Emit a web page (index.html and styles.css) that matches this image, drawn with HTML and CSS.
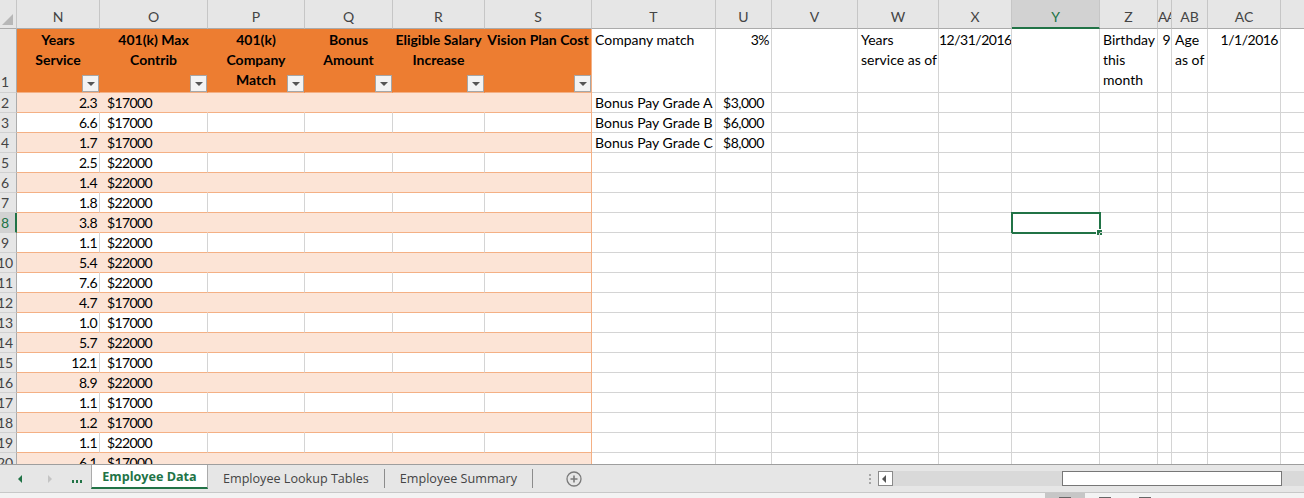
FILE: index.html
```html
<!DOCTYPE html>
<html lang="en-US">
  <head>
    <meta charset="utf-8">
    <title>Employee Data</title>
    <link rel="stylesheet" href="styles.css">
  </head>
<body>
  <div class="app">
    <div class="sheet">
      <table class="grid">
        <colgroup>
          <col class="c-rh"><col class="c-n"><col class="c-o"><col class="c-p"><col class="c-q"><col class="c-r"><col class="c-s">
          <col class="c-t"><col class="c-u"><col class="c-v"><col class="c-w"><col class="c-x"><col class="c-y"><col class="c-z">
          <col class="c-aa"><col class="c-ab"><col class="c-ac"><col class="c-ad">
        </colgroup>
        <tr class="colhead">
          <th class="corner"><span class="tri"></span></th>
          <th>N</th><th>O</th><th>P</th><th>Q</th><th>R</th><th>S</th><th>T</th><th>U</th><th>V</th><th>W</th><th>X</th>
          <th class="sel">Y</th><th>Z</th><th class="tight">AA</th><th>AB</th><th>AC</th><th></th>
        </tr>
        <tr class="r1">
          <th><span>1</span></th>
          <td class="hd">Years<br>Service<span class="filter"></span></td>
          <td class="hd">401(k) Max<br>Contrib<span class="filter"></span></td>
          <td class="hd">401(k)<br>Company<br>Match<span class="filter"></span></td>
          <td class="hd">Bonus<br>Amount<span class="filter"></span></td>
          <td class="hd">Eligible Salary<br>Increase<span class="filter"></span></td>
          <td class="hd">Vision Plan Cost<span class="filter"></span></td>
          <td>Company match</td>
          <td class="num">3%</td>
          <td></td>
          <td>Years<br>service as of</td>
          <td class="num">12/31/2016</td>
          <td></td>
          <td>Birthday<br>this<br>month</td>
          <td class="num tight">9</td>
          <td>Age<br>as of</td>
          <td class="num">1/1/2016</td>
          <td></td>
        </tr>
        <tr class="data band"><th><span>2</span></th><td class="num">2.3</td><td class="cash">$17000</td><td></td><td></td><td></td><td></td><td>Bonus Pay Grade A</td><td class="acct"><span class="cur">$</span>3,000</td><td></td><td></td><td></td><td></td><td></td><td></td><td></td><td></td><td></td></tr>
        <tr class="data"><th><span>3</span></th><td class="num">6.6</td><td class="cash">$17000</td><td></td><td></td><td></td><td></td><td>Bonus Pay Grade B</td><td class="acct"><span class="cur">$</span>6,000</td><td></td><td></td><td></td><td></td><td></td><td></td><td></td><td></td><td></td></tr>
        <tr class="data band"><th><span>4</span></th><td class="num">1.7</td><td class="cash">$17000</td><td></td><td></td><td></td><td></td><td>Bonus Pay Grade C</td><td class="acct"><span class="cur">$</span>8,000</td><td></td><td></td><td></td><td></td><td></td><td></td><td></td><td></td><td></td></tr>
        <tr class="data"><th><span>5</span></th><td class="num">2.5</td><td class="cash">$22000</td><td></td><td></td><td></td><td></td><td></td><td></td><td></td><td></td><td></td><td></td><td></td><td></td><td></td><td></td><td></td></tr>
        <tr class="data band"><th><span>6</span></th><td class="num">1.4</td><td class="cash">$22000</td><td></td><td></td><td></td><td></td><td></td><td></td><td></td><td></td><td></td><td></td><td></td><td></td><td></td><td></td><td></td></tr>
        <tr class="data"><th><span>7</span></th><td class="num">1.8</td><td class="cash">$22000</td><td></td><td></td><td></td><td></td><td></td><td></td><td></td><td></td><td></td><td></td><td></td><td></td><td></td><td></td><td></td></tr>
        <tr class="data band"><th class="sel"><span>8</span></th><td class="num">3.8</td><td class="cash">$17000</td><td></td><td></td><td></td><td></td><td></td><td></td><td></td><td></td><td></td><td class="active"><span class="cursor"></span></td><td></td><td></td><td></td><td></td><td></td></tr>
        <tr class="data"><th><span>9</span></th><td class="num">1.1</td><td class="cash">$22000</td><td></td><td></td><td></td><td></td><td></td><td></td><td></td><td></td><td></td><td></td><td></td><td></td><td></td><td></td><td></td></tr>
        <tr class="data band"><th><span>10</span></th><td class="num">5.4</td><td class="cash">$22000</td><td></td><td></td><td></td><td></td><td></td><td></td><td></td><td></td><td></td><td></td><td></td><td></td><td></td><td></td><td></td></tr>
        <tr class="data"><th><span>11</span></th><td class="num">7.6</td><td class="cash">$22000</td><td></td><td></td><td></td><td></td><td></td><td></td><td></td><td></td><td></td><td></td><td></td><td></td><td></td><td></td><td></td></tr>
        <tr class="data band"><th><span>12</span></th><td class="num">4.7</td><td class="cash">$17000</td><td></td><td></td><td></td><td></td><td></td><td></td><td></td><td></td><td></td><td></td><td></td><td></td><td></td><td></td><td></td></tr>
        <tr class="data"><th><span>13</span></th><td class="num">1.0</td><td class="cash">$17000</td><td></td><td></td><td></td><td></td><td></td><td></td><td></td><td></td><td></td><td></td><td></td><td></td><td></td><td></td><td></td></tr>
        <tr class="data band"><th><span>14</span></th><td class="num">5.7</td><td class="cash">$22000</td><td></td><td></td><td></td><td></td><td></td><td></td><td></td><td></td><td></td><td></td><td></td><td></td><td></td><td></td><td></td></tr>
        <tr class="data"><th><span>15</span></th><td class="num">12.1</td><td class="cash">$17000</td><td></td><td></td><td></td><td></td><td></td><td></td><td></td><td></td><td></td><td></td><td></td><td></td><td></td><td></td><td></td></tr>
        <tr class="data band"><th><span>16</span></th><td class="num">8.9</td><td class="cash">$22000</td><td></td><td></td><td></td><td></td><td></td><td></td><td></td><td></td><td></td><td></td><td></td><td></td><td></td><td></td><td></td></tr>
        <tr class="data"><th><span>17</span></th><td class="num">1.1</td><td class="cash">$17000</td><td></td><td></td><td></td><td></td><td></td><td></td><td></td><td></td><td></td><td></td><td></td><td></td><td></td><td></td><td></td></tr>
        <tr class="data band"><th><span>18</span></th><td class="num">1.2</td><td class="cash">$17000</td><td></td><td></td><td></td><td></td><td></td><td></td><td></td><td></td><td></td><td></td><td></td><td></td><td></td><td></td><td></td></tr>
        <tr class="data"><th><span>19</span></th><td class="num">1.1</td><td class="cash">$22000</td><td></td><td></td><td></td><td></td><td></td><td></td><td></td><td></td><td></td><td></td><td></td><td></td><td></td><td></td><td></td></tr>
        <tr class="data band"><th><span>20</span></th><td class="num">6.1</td><td class="cash">$17000</td><td></td><td></td><td></td><td></td><td></td><td></td><td></td><td></td><td></td><td></td><td></td><td></td><td></td><td></td><td></td></tr>
      </table>
    </div>

    <div class="tabbar">
      <div class="nav">
        <span class="arrow-left"></span>
        <span class="arrow-right"></span>
        <span class="more"><i></i><i></i><i></i></span>
      </div>
      <div class="tab active">Employee Data</div>
      <div class="tab">Employee Lookup Tables</div>
      <div class="tab">Employee Summary</div>
      <div class="add">
        <svg width="16" height="16" viewBox="0 0 16 16">
          <circle cx="8" cy="8" r="7" fill="none" stroke="#7a7a7a" stroke-width="1.3"/>
          <path d="M8 4.5v7M4.5 8h7" stroke="#7a7a7a" stroke-width="1.6"/>
        </svg>
      </div>
      <div class="spacer"></div>
      <div class="dots"><i></i><i></i><i></i></div>
      <div class="hscroll">
        <span class="scroll-btn"></span>
        <div class="track">
          <span class="thumb"></span>
        </div>
      </div>
    </div>

    <div class="status">
      <div class="views">
        <span class="view on"><i></i></span>
        <span class="view"><i></i></span>
        <span class="view"><i></i></span>
      </div>
    </div>
  </div>
</body>
</html>
```

FILE: styles.css
```css
body {
  margin: 0;
  background: #fff;
  font-family: "Lato", "Liberation Sans", sans-serif;
  overflow: hidden;
}

.app {
  width: 1304px;
  height: 498px;
  display: flex;
  flex-direction: column;
  overflow: hidden;
}

.sheet {
  height: 464px;
  overflow: hidden;
  flex: none;
}

.grid {
  border-collapse: separate;
  border-spacing: 0;
  table-layout: fixed;
  width: 1350px;
  font-size: 14px;
  color: #000;
}

.c-rh { width: 17px; }
.c-n { width: 83px; }
.c-o { width: 108px; }
.c-p { width: 97px; }
.c-q { width: 88px; }
.c-r { width: 92px; }
.c-s { width: 107px; }
.c-t { width: 124px; }
.c-u { width: 56px; }
.c-v { width: 86px; }
.c-w { width: 81px; }
.c-x { width: 73px; }
.c-y { width: 88px; }
.c-z { width: 58px; }
.c-aa { width: 14px; }
.c-ab { width: 36px; }
.c-ac { width: 73px; }
.c-ad { width: 69px; }

.grid td {
  border-right: 1px solid #d4d4d4;
  border-bottom: 1px solid #d4d4d4;
  padding: 0 3px;
  white-space: nowrap;
  overflow: hidden;
  line-height: 19px;
  position: relative;
}

.grid th {
  background: #e6e6e6;
  color: #444;
  font-weight: normal;
  padding: 0;
  white-space: nowrap;
  overflow: hidden;
}

/* column letters */
.colhead {
  height: 28px;
}

.colhead th {
  border-right: 1px solid #c6c6c6;
  border-bottom: 1px solid #ababab;
  padding-top: 7px;
  line-height: 20px;
  vertical-align: top;
  text-align: center;
}

.colhead th.sel {
  background: #d2d2d2;
  color: #217346;
  border-bottom: 2px solid #217346;
}

.colhead th.tight {
  letter-spacing: -1px;
  text-align: left;
}

.corner {
  position: relative;
}

.corner .tri {
  position: absolute;
  right: 3px;
  bottom: 3px;
  width: 0;
  height: 0;
  border-left: 11px solid transparent;
  border-bottom: 11px solid #b7b7b7;
}

/* row numbers: the column is scrolled, only its right part shows */
.r1 th, .data th {
  border-right: 1px solid #ababab;
  border-bottom: 1px solid #d0d0d0;
  line-height: 19px;
}

.r1 th span, .data th span {
  display: block;
  width: 30px;
  margin-left: -10px;
  text-align: center;
}

.data th.sel {
  background: #d2d2d2;
  color: #217346;
  border-right: 2px solid #217346;
}

/* header row of the table */
.r1 {
  height: 64px;
}

.r1 th {
  vertical-align: bottom;
  line-height: 20px;
}

.r1 td {
  vertical-align: top;
  line-height: 20px;
  padding-top: 1px;
}

.r1 td.hd {
  background: #ed7d31;
  border-right-color: #ed7d31;
  border-bottom-color: #f4b084;
  text-align: center;
  font-weight: bold;
  padding: 1px 0 0;
}

.r1 td.hd:nth-child(7) {
  border-right-color: #f4b084;
}

.filter {
  position: absolute;
  right: 0;
  bottom: 0;
  width: 17px;
  height: 17px;
  box-sizing: border-box;
  border: 1px solid #a6a6a6;
  background: #f3f3f3;
}

.filter::after {
  content: "";
  position: absolute;
  left: 4px;
  top: 6px;
  border-left: 4px solid transparent;
  border-right: 4px solid transparent;
  border-top: 4px solid #555;
}

/* data rows */
.data {
  height: 20px;
}

.data td:nth-child(-n+7) {
  border-bottom-color: #f4b084;
}

.band td:nth-child(-n+7) {
  background: #fce4d6;
  border-right-color: #fce4d6;
}

.data td:nth-child(7) {
  border-right-color: #f4b084;
}

.num {
  text-align: right;
}

.grid td.num {
  padding-left: 0;
  padding-right: 2px;
  letter-spacing: -0.5px;
}

.grid td.tight {
  padding: 1px 1px 0 0;
}

.grid td.cash {
  padding-left: 7px;
  letter-spacing: -0.6px;
}

.grid td.acct {
  padding: 0 8px 0 7px;
  text-align: right;
  letter-spacing: -0.5px;
}

.acct .cur {
  float: left;
}

.grid td.active {
  overflow: visible;
}

.cursor {
  position: absolute;
  left: -1px;
  top: -1px;
  right: -2px;
  bottom: -2px;
  border: 2px solid #217346;
}

.cursor::after {
  content: "";
  position: absolute;
  right: -4px;
  bottom: -4px;
  width: 5px;
  height: 5px;
  background: #217346;
  border: 1px solid #fff;
}

/* sheet tabs */
.tabbar {
  height: 27px;
  flex: none;
  background: #e6e6e6;
  border-top: 1px solid #9e9e9e;
  display: flex;
  align-items: stretch;
  font-family: "Open Sans", "Noto Sans", sans-serif;
  font-size: 12.6px;
  color: #444;
}

.nav {
  width: 91px;
  flex: none;
  display: flex;
  align-items: center;
  padding-left: 18px;
  box-sizing: border-box;
}

.arrow-left {
  width: 0;
  height: 0;
  border-top: 4px solid transparent;
  border-bottom: 4px solid transparent;
  border-right: 4px solid #217346;
}

.arrow-right {
  width: 0;
  height: 0;
  margin-left: 26px;
  border-top: 4px solid transparent;
  border-bottom: 4px solid transparent;
  border-left: 4px solid #c4c4c4;
}

.more {
  margin-left: 20px;
  padding-top: 5px;
  display: flex;
  gap: 2px;
}

.more i {
  width: 2px;
  height: 3px;
  background: #217346;
}

.tab {
  display: flex;
  align-items: center;
  padding: 0 15px;
  margin: 4px 0 4px;
  border-right: 1px solid #8c8c8c;
  white-space: nowrap;
}

.tab.active {
  margin: 0 0 3px;
  width: 117px;
  box-sizing: border-box;
  justify-content: center;
  padding: 0;
  background: #fff;
  color: #217346;
  font-weight: bold;
  border-left: 1px solid #ababab;
  border-right: 1px solid #ababab;
  border-bottom: 2px solid #217346;
}

.add {
  display: flex;
  align-items: center;
  padding-left: 33px;
}

.spacer {
  flex: 1;
}

.dots {
  width: 16px;
  display: flex;
  flex-direction: column;
  justify-content: center;
  align-items: center;
  gap: 2px;
}

.dots i {
  width: 2px;
  height: 2px;
  background: #a6a6a6;
}

.hscroll {
  width: 426px;
  display: flex;
  align-items: center;
}

.scroll-btn {
  width: 15px;
  height: 15px;
  box-sizing: border-box;
  border: 1px solid #8a8a8a;
  background: #fff;
  position: relative;
}

.scroll-btn::after {
  content: "";
  position: absolute;
  left: 3px;
  top: 3px;
  border-top: 4px solid transparent;
  border-bottom: 4px solid transparent;
  border-right: 4px solid #555;
}

.track {
  flex: 1;
  height: 15px;
  background: #d9d9d9;
  display: flex;
  padding-left: 169px;
}

.thumb {
  width: 220px;
  height: 15px;
  box-sizing: border-box;
  border: 1px solid #777;
  background: #fff;
}

/* status bar */
.status {
  flex: 1;
  background: #f3f3f3;
  border-top: 1px solid #c8c8c8;
  display: flex;
  justify-content: flex-end;
  padding-right: 139px;
}

.views {
  display: flex;
}

.view {
  width: 40px;
  display: flex;
  justify-content: center;
  padding-top: 4px;
}

.view.on {
  background: #c6c6c6;
}

.view i {
  width: 10px;
  height: 4px;
  border: 1px solid #666;
  border-bottom: 0;
}
```
